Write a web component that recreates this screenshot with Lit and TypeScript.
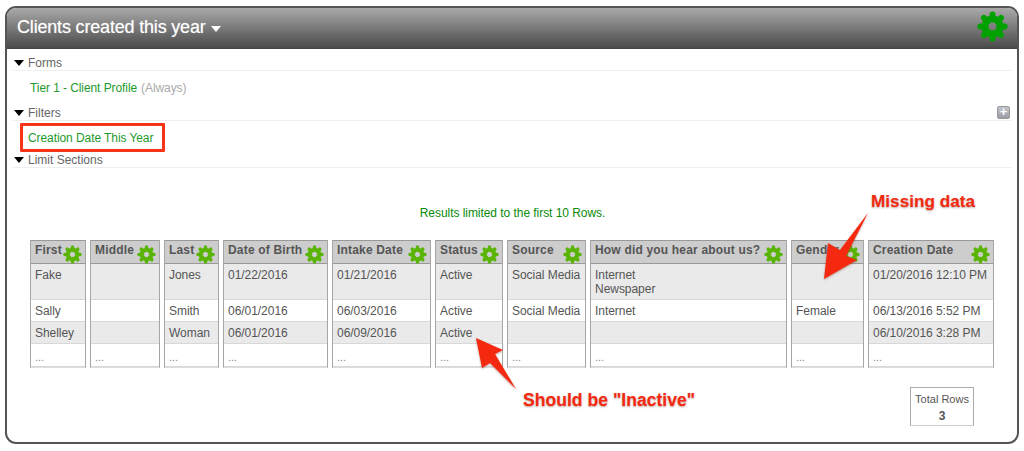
import { LitElement, html, css, svg } from "lit";
import { customElement } from "lit/decorators.js";

const columns = [
  { title: "First", cells: ["Fake", "Sally", "Shelley", "..."] },
  { title: "Middle", cells: ["", "", "", "..."] },
  { title: "Last", cells: ["Jones", "Smith", "Woman", "..."] },
  { title: "Date of Birth", cells: ["01/22/2016", "06/01/2016", "06/01/2016", "..."] },
  { title: "Intake Date", cells: ["01/21/2016", "06/03/2016", "06/09/2016", "..."] },
  { title: "Status", cells: ["Active", "Active", "Active", "..."] },
  { title: "Source", cells: ["Social Media", "Social Media", "", "..."] },
  { title: "How did you hear about us?", cells: [["Internet", "Newspaper"], "Internet", "", "..."] },
  { title: "Gender", cells: ["", "Female", "", "..."] },
  { title: "Creation Date", cells: ["01/20/2016 12:10 PM", "06/13/2016 5:52 PM", "06/10/2016 3:28 PM", "..."] },
];

const gear = (cls: string) => html`<svg class=${cls} viewBox="0 0 28 28" aria-hidden="true">
  ${[0, 45, 90, 135, 180, 225, 270, 315].map(
    (a) => svg`<line x1="14" y1="3" x2="14" y2="8" stroke="currentColor" stroke-width="5.2" stroke-linecap="round" transform="rotate(${a} 14 14)"></line>`
  )}
  <circle cx="14" cy="14" r="7.8" fill="none" stroke="currentColor" stroke-width="4.4"></circle>
</svg>`;

const tri = html`<span class="tri"></span>`;

@customElement("app-root")
export class AppRoot extends LitElement {
  static styles = css`
    :host {
      display: block;
      position: relative;
      width: 1024px;
      height: 451px;
      background: #fff;
      overflow: hidden;
      font-family: "Liberation Sans", Arial, sans-serif;
      font-size: 12px;
      color: #555;
    }
    .card {
      box-sizing: border-box;
      margin: 6px 0 0 5px;
      width: 1014px;
      height: 438px;
      border: 2px solid #555;
      border-radius: 11px;
      overflow: hidden;
      background: #fff;
    }
    .head {
      height: 41px;
      box-sizing: border-box;
      padding: 0 9px 0 10px;
      display: flex;
      align-items: center;
      justify-content: space-between;
      background: linear-gradient(#a9a9a9, #4a4a4a);
      border-bottom: 1px solid #444;
      color: #fff;
      font-size: 18px;
      letter-spacing: -0.18px;
    }
    .title {
      display: flex;
      align-items: center;
      gap: 5px;
      margin-top: -1px;
      text-shadow: 0 0 1px rgba(255, 255, 255, 0.5);
    }
    .caret {
      width: 0;
      height: 0;
      border-left: 5px solid transparent;
      border-right: 5px solid transparent;
      border-top: 6px solid #fff;
      margin-top: 2px;
    }
    .biggear {
      width: 31px;
      height: 31px;
      color: #00a000;
      margin-top: -3px;
    }
    .body {
      padding: 6px 5px 0 6px;
    }
    .sec {
      display: flex;
      align-items: center;
      height: 15px;
      border-bottom: 1px solid #eee;
      gap: 4px;
      color: #666;
      line-height: 14px;
    }
    .tri {
      width: 0;
      height: 0;
      border-left: 5px solid transparent;
      border-right: 5px solid transparent;
      border-top: 6px solid #000;
      margin-left: 1px;
    }
    .plus {
      margin-left: auto;
      margin-right: 2px;
      width: 13px;
      height: 13px;
      box-sizing: border-box;
      border-radius: 2px;
      background: linear-gradient(#c2c6cc, #9a9ea4);
      border: 1px solid #999;
      color: #fff;
      font-size: 13px;
      font-weight: bold;
      line-height: 10px;
      text-align: center;
    }
    .form {
      display: flex;
      align-items: center;
      gap: 4px;
      box-sizing: border-box;
      height: 34px;
      padding: 0 0 0 17px;
      letter-spacing: -0.08px;
    }
    .green {
      color: #1e9a2c;
    }
    .muted {
      color: #aaa;
    }
    .filterbox {
      box-sizing: border-box;
      margin: 2px 0 0 7px;
      width: 145px;
      height: 29px;
      border: 3px solid #f8351a;
      display: flex;
      align-items: center;
      padding-left: 5px;
      border-radius: 1px;
      white-space: nowrap;
      letter-spacing: -0.08px;
    }
    .result {
      margin-top: 38px;
      text-align: center;
      color: #0a8a0a;
      font-size: 12px;
      letter-spacing: -0.05px;
      line-height: 14px;
    }
    .table {
      display: grid;
      grid-template-columns: 56px 70px 55px 105px 99px 68px 79px 197px 73px 126px;
      gap: 4px;
      margin: 20px 0 0 17px;
    }
    .col {
      box-sizing: border-box;
      border-left: 1.5px solid #a6a6a6;
      border-right: 1.5px solid #a6a6a6;
      border-bottom: 1px solid #ddd;
      display: grid;
      grid-template-rows: 24px 36px 22px 22px 23px;
    }
    .th {
      box-sizing: border-box;
      background: #cdcdcd;
      border-top: 1.5px solid #999;
      border-bottom: 1.5px solid #999;
      display: flex;
      justify-content: space-between;
      padding: 2px 0 0 4px;
      font-weight: bold;
      color: #555;
      letter-spacing: 0.18px;
      white-space: nowrap;
    }
    .smallgear {
      width: 19px;
      height: 19px;
      color: #5ab405;
      margin: 1.5px 3px 0 0;
      flex: none;
    }
    .td {
      box-sizing: border-box;
      padding: 4px 0 0 4px;
      border-bottom: 1px solid #d8d8d8;
      line-height: 14px;
      white-space: nowrap;
      overflow: hidden;
      letter-spacing: -0.04px;
    }
    .td.odd {
      background: #eaeaea;
    }
    .td.more {
      color: #888;
      font-size: 11px;
      padding-top: 6px;
    }
    .total {
      box-sizing: border-box;
      margin: 19px 0 0 897px;
      width: 64px;
      height: 39px;
      border: 1.5px solid #aaa;
      border-bottom-color: #ccc;
      text-align: center;
      font-size: 11px;
      line-height: 14px;
      padding-top: 4px;
    }
    .total b {
      display: block;
      font-size: 12px;
      margin-top: 3px;
    }
    .marks {
      position: absolute;
      left: 0;
      top: 0;
      width: 1024px;
      height: 451px;
      filter: drop-shadow(0 1px 1px rgba(120, 60, 50, 0.45));
      pointer-events: none;
    }
    .note {
      position: absolute;
      font-weight: bold;
      color: #f5290f;
      line-height: 18px;
      white-space: nowrap;
      text-shadow: 0 1px 2px rgba(120, 60, 50, 0.5);
    }
    .n1 {
      left: 871px;
      top: 192px;
      font-size: 17.2px;
    }
    .n2 {
      left: 523px;
      top: 391px;
      font-size: 17.6px;
    }
  `;

  render() {
    return html`
      <div class="card">
        <div class="head">
          <div class="title">Clients created this year <span class="caret"></span></div>
          ${gear("biggear")}
        </div>
        <div class="body">
          <div class="sec">${tri}<span>Forms</span></div>
          <div class="form"><span class="green">Tier 1 - Client Profile</span><span class="muted">(Always)</span></div>
          <div class="sec">${tri}<span>Filters</span><span class="plus">+</span></div>
          <div class="filterbox"><span class="green">Creation Date This Year</span></div>
          <div class="sec">${tri}<span>Limit Sections</span></div>
          <div class="result">Results limited to the first 10 Rows.</div>
          <div class="table">
            ${columns.map(
              (c) => html`<div class="col">
                <div class="th"><span>${c.title}</span>${gear("smallgear")}</div>
                ${c.cells.map(
                  (v, i) => html`<div class="td ${i % 2 === 0 ? "odd" : ""} ${i === 3 ? "more" : ""}">
                    ${Array.isArray(v) ? v.map((l) => html`${l}<br />`) : v}
                  </div>`
                )}
              </div>`
            )}
          </div>
          <div class="total">Total Rows<b>3</b></div>
        </div>
      </div>
      <svg class="marks" viewBox="0 0 1024 451" aria-hidden="true">
        <polygon fill="#f5290f" points="868,213 846,256 857,260 824,279 828,243 840,250"></polygon>
        <polygon fill="#f5290f" points="476,338 503,350 495,354 516,389 490,363 482,368"></polygon>
      </svg>
      <div class="note n1">Missing data</div>
      <div class="note n2">Should be "Inactive"</div>
    `;
  }
}
